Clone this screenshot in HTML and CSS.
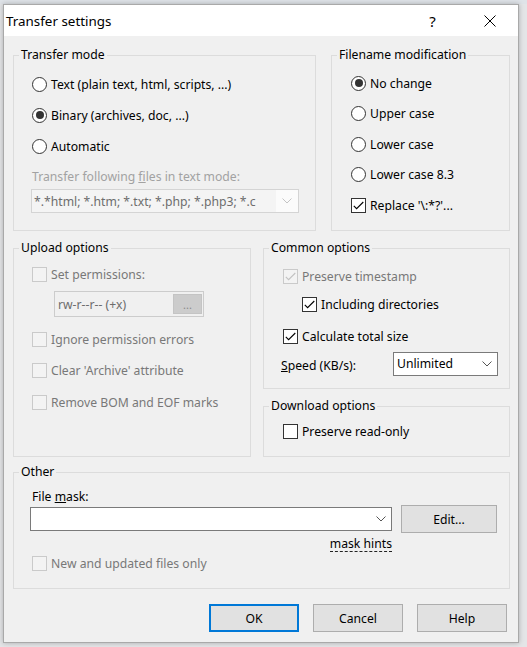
FILE: index.html
```html
<!DOCTYPE html>
<html>
<head>
<meta charset="utf-8">
<title>Transfer settings</title>
<link rel="stylesheet" href="styles.css">
</head>
<body>
<div class="desk">
  <div class="dialog">
    <div class="titlebar">
      <span class="title">Transfer settings</span>
      <span class="tb-btn">?</span>
      <span class="tb-btn"><svg width="12" height="12" viewBox="0 0 12 12"><path d="M0.5 0.5 L11.5 11.5 M11.5 0.5 L0.5 11.5" stroke="#000" stroke-width="1" fill="none"/></svg></span>
    </div>
    <div class="content">
      <div class="row row1">
        <fieldset class="grp g-mode">
          <legend>Transfer mode</legend>
          <div class="inner">
            <div class="opt"><span class="ctl radio"></span><span>Text (plain text, html, scripts, ...)</span></div>
            <div class="opt"><span class="ctl radio on"></span><span>Binary (archives, doc, ...)</span></div>
            <div class="opt"><span class="ctl radio"></span><span>Automatic</span></div>
            <div class="static dis2">Transfer following <u>f</u>iles in text mode:</div>
            <div class="combo combo-dis">
              <span class="combo-text">*.*html; *.htm; *.txt; *.php; *.php3; *.c</span>
              <span class="combo-arrow"><svg width="10" height="6" viewBox="0 0 10 6"><polyline points="0.5,0.5 5,5 9.5,0.5" fill="none" stroke="#c4c4c4" stroke-width="1"/></svg></span>
            </div>
          </div>
        </fieldset>
        <fieldset class="grp g-fname">
          <legend>Filename modification</legend>
          <div class="inner">
            <div class="opt"><span class="ctl radio on"></span><span>No change</span></div>
            <div class="opt"><span class="ctl radio"></span><span>Upper case</span></div>
            <div class="opt"><span class="ctl radio"></span><span>Lower case</span></div>
            <div class="opt"><span class="ctl radio"></span><span>Lower case 8.3</span></div>
            <div class="opt"><span class="ctl check"><svg width="13" height="13" viewBox="0 0 13 13"><polyline points="1.8,6.8 4.6,9.7 11.3,3" fill="none" stroke="#000" stroke-width="1.1"/></svg></span><span>Replace '\:*?'...</span></div>
          </div>
        </fieldset>
      </div>

      <div class="row row2">
        <fieldset class="grp g-upload">
          <legend>Upload options</legend>
          <div class="inner">
            <div class="opt dis"><span class="ctl check off"></span><span>Set permissions:</span></div>
            <div class="perm">
              <span>rw-r--r-- (+x)</span>
              <span class="perm-btn">...</span>
            </div>
            <div class="opt dis o-ignore"><span class="ctl check off"></span><span>Ignore permission errors</span></div>
            <div class="opt dis o-next"><span class="ctl check off"></span><span>Clear 'Archive' attribute</span></div>
            <div class="opt dis o-next"><span class="ctl check off"></span><span>Remove BOM and EOF marks</span></div>
          </div>
        </fieldset>
        <div class="rcol">
          <fieldset class="grp g-common">
            <legend>Common options</legend>
            <div class="inner">
              <div class="opt dis"><span class="ctl check off"><svg width="13" height="13" viewBox="0 0 13 13"><polyline points="1.8,6.8 4.6,9.7 11.3,3" fill="none" stroke="#c2c2c2" stroke-width="1.1"/></svg></span><span>Preserve timestamp</span></div>
              <div class="opt o-incl"><span class="ctl check"><svg width="13" height="13" viewBox="0 0 13 13"><polyline points="1.8,6.8 4.6,9.7 11.3,3" fill="none" stroke="#000" stroke-width="1.1"/></svg></span><span>Including directories</span></div>
              <div class="opt o-calc"><span class="ctl check"><svg width="13" height="13" viewBox="0 0 13 13"><polyline points="1.8,6.8 4.6,9.7 11.3,3" fill="none" stroke="#000" stroke-width="1.1"/></svg></span><span>Calculate total size</span></div>
              <div class="speed">
                <span class="speed-label"><u>S</u>peed (KB/s):</span>
                <div class="combo combo-speed">
                  <span class="combo-text">Unlimited</span>
                  <span class="combo-arrow"><svg width="10" height="6" viewBox="0 0 10 6"><polyline points="0.5,0.5 5,5 9.5,0.5" fill="none" stroke="#555" stroke-width="1"/></svg></span>
                </div>
              </div>
            </div>
          </fieldset>
          <fieldset class="grp g-download">
            <legend>Download options</legend>
            <div class="inner">
              <div class="opt"><span class="ctl check"></span><span>Preserve read-only</span></div>
            </div>
          </fieldset>
        </div>
      </div>

      <fieldset class="grp g-other">
        <legend>Other</legend>
        <div class="inner">
          <div class="mask-label">File <u>m</u>ask:</div>
          <div class="mask-row">
            <div class="mask-col">
              <div class="combo combo-mask">
                <span class="combo-text"></span>
                <span class="combo-arrow"><svg width="10" height="6" viewBox="0 0 10 6"><polyline points="0.5,0.5 5,5 9.5,0.5" fill="none" stroke="#555" stroke-width="1"/></svg></span>
              </div>
            </div>
            <span class="btn btn-edit">Edit...</span>
          </div>
          <div class="hints-row"><span class="hints">mask hints</span></div>
          <div class="opt dis o-new"><span class="ctl check off"></span><span>New and updated files only</span></div>
        </div>
      </fieldset>

      <div class="buttons">
        <span class="btn btn-main default">OK</span>
        <span class="btn btn-main">Cancel</span>
        <span class="btn btn-main">Help</span>
      </div>
    </div>
  </div>
</div>
</body>
</html>
```

FILE: styles.css
```css
html, body {
  margin: 0;
  padding: 0;
}
body {
  background: #e3e5e8;
  font-family: "Noto Sans", "Open Sans", sans-serif;
  font-size: 12.2px;
  color: #000;
}
.desk {
  width: 527px;
  height: 647px;
  overflow: hidden;
  box-sizing: border-box;
  padding: 4px 0 0 3px;
  background: linear-gradient(to bottom, #dfe3e8 0, #dfe3e8 4px, #e4e5e7 4px);
}
.dialog {
  width: 516px;
  height: 639px;
  box-sizing: border-box;
  border: 1px solid #a9a9a9;
  background: #f0f0f0;
  display: flex;
  flex-direction: column;
  box-shadow: 0 0 5px rgba(0,0,0,0.25);
}
.titlebar {
  height: 31px;
  flex: none;
  background: #fff;
  display: flex;
  align-items: center;
}
.title {
  flex: 1;
  padding-left: 2px;
  font-size: 13.4px;
}
.tb-btn {
  width: 57px;
  height: 31px;
  display: flex;
  align-items: center;
  justify-content: center;
  font-size: 15px;
}
.content {
  flex: 1;
  padding: 11px 8px 0 9px;
  display: flex;
  flex-direction: column;
}
.row {
  display: flex;
}
.row1 { gap: 15px; }
.row2 { gap: 12px; margin-top: 9px; align-items: stretch; }

.grp {
  margin: 0;
  padding: 0;
  border: 1px solid #dcdcdc;
  min-width: 0;
  box-sizing: border-box;
}
.grp legend {
  padding: 0 2px;
  margin-left: 5px;
  line-height: 16px;
  height: 16px;
}
.g-mode { width: 303px; }
.g-fname { width: 179px; }
.g-upload { width: 238px; }
.rcol {
  width: 247px;
  display: flex;
  flex-direction: column;
  gap: 9px;
}
.g-common, .g-download { width: 247px; }
.g-other { width: 497px; margin-top: 7px; }

.opt {
  height: 20px;
  display: flex;
  align-items: center;
  white-space: nowrap;
}
.ctl {
  width: 15px;
  height: 15px;
  box-sizing: border-box;
  border: 1px solid #333;
  background: #fff;
  margin-right: 4px;
  flex: none;
  display: flex;
  align-items: center;
  justify-content: center;
}
.radio { border-radius: 50%; }
.radio.on::after {
  content: "";
  width: 8px;
  height: 8px;
  border-radius: 50%;
  background: #333;
}
.check svg { display: block; }
.check.off {
  border-color: #cacaca;
  background: #f3f3f3;
}
.dis { color: #787878; }
.dis2 { color: #a2a2a2; }

/* Transfer mode */
.g-mode .inner {
  padding: 11px 0 17px 18px;
  display: flex;
  flex-direction: column;
}
.g-mode .opt + .opt { margin-top: 11px; }
.static {
  height: 20px;
  line-height: 20px;
  margin-top: 11px;
  white-space: nowrap;
}
.combo {
  height: 24px;
  box-sizing: border-box;
  border: 1px solid #7a7a7a;
  background: #fff;
  display: flex;
  align-items: center;
}
.combo-text {
  flex: 1;
  min-width: 0;
  white-space: nowrap;
  padding-left: 3px;
  align-self: stretch;
  display: flex;
  align-items: center;
}
.combo-arrow {
  width: 20px;
  flex: none;
  display: flex;
  align-items: center;
  justify-content: center;
  align-self: stretch;
}
.combo-arrow svg { display: block; }
.combo-dis {
  width: 268px;
  margin: 2px 0 0 -1px;
  border-color: #d4d4d4;
  background: #fbfbfb;
  color: #6d6d6d;
}
.combo-dis .combo-text {
  background: #f4f4f4;
  padding-left: 2px;
}
.combo-dis .combo-arrow { width: 22px; }

/* Filename modification */
.g-fname .inner {
  padding: 10px 0 0 19px;
  display: flex;
  flex-direction: column;
}
.g-fname .opt + .opt { margin-top: 10.5px; }

/* Upload options */
.g-upload .inner {
  padding: 8.5px 0 0 18px;
  display: flex;
  flex-direction: column;
}
.perm {
  margin: 6.5px 0 0 22px;
  width: 150px;
  height: 26px;
  box-sizing: border-box;
  border: 1px solid #cccccc;
  background: #f0f0f0;
  color: #6d6d6d;
  display: flex;
  align-items: center;
  justify-content: space-between;
  padding: 0 1px 0 3px;
}
.perm-btn {
  width: 29px;
  height: 20px;
  box-sizing: border-box;
  background: #cccccc;
  border: 1px solid #c4c4c4;
  color: #8a8a8a;
  display: flex;
  align-items: center;
  justify-content: center;
  font-size: 11px;
  line-height: 1;
}
.o-ignore { margin-top: 12px; }
.o-next { margin-top: 11.5px; }

/* Common options */
.g-common .inner {
  padding: 10.5px 0 12px 19px;
  display: flex;
  flex-direction: column;
}
.o-incl { margin: 8px 0 0 19px; }
.o-calc { margin-top: 11.5px; }
.speed {
  margin: 6px 0 0 -2px;
  display: flex;
  align-items: center;
}
.speed-label {
  width: 112px;
  flex: none;
  padding-top: 2px;
}
.combo-speed { width: 105px; }
.combo-speed .combo-text { padding-bottom: 2px; }

/* Download options */
.g-download .inner {
  padding: 7px 0 15px 19px;
}

/* Other */
.g-other .inner {
  padding: 9px 0 15px 16px;
  display: flex;
  flex-direction: column;
}
.mask-label {
  height: 16px;
  line-height: 16px;
  margin-left: 2px;
}
.mask-row {
  height: 28px;
  display: flex;
  align-items: center;
  gap: 9px;
}
.mask-col { width: 362px; }
.combo-mask { width: 362px; }
.hints-row {
  width: 362px;
  margin-top: 2px;
  text-align: right;
  height: 15px;
}
.hints {
  display: inline-block;
  line-height: 14px;
  border-bottom: 1px dashed #222;
}
.o-new { margin: 3px 0 0 2px; }

.btn {
  box-sizing: border-box;
  background: #e1e1e1;
  border: 1px solid #adadad;
  display: flex;
  align-items: center;
  justify-content: center;
}
.btn-edit {
  width: 96px;
  height: 28px;
}
.buttons {
  margin-top: 15px;
  padding-right: 3px;
  display: flex;
  justify-content: flex-end;
  gap: 14px;
}
.btn-main {
  width: 90px;
  height: 28px;
}
.btn.default {
  border: 2px solid #0078d7;
}
```
